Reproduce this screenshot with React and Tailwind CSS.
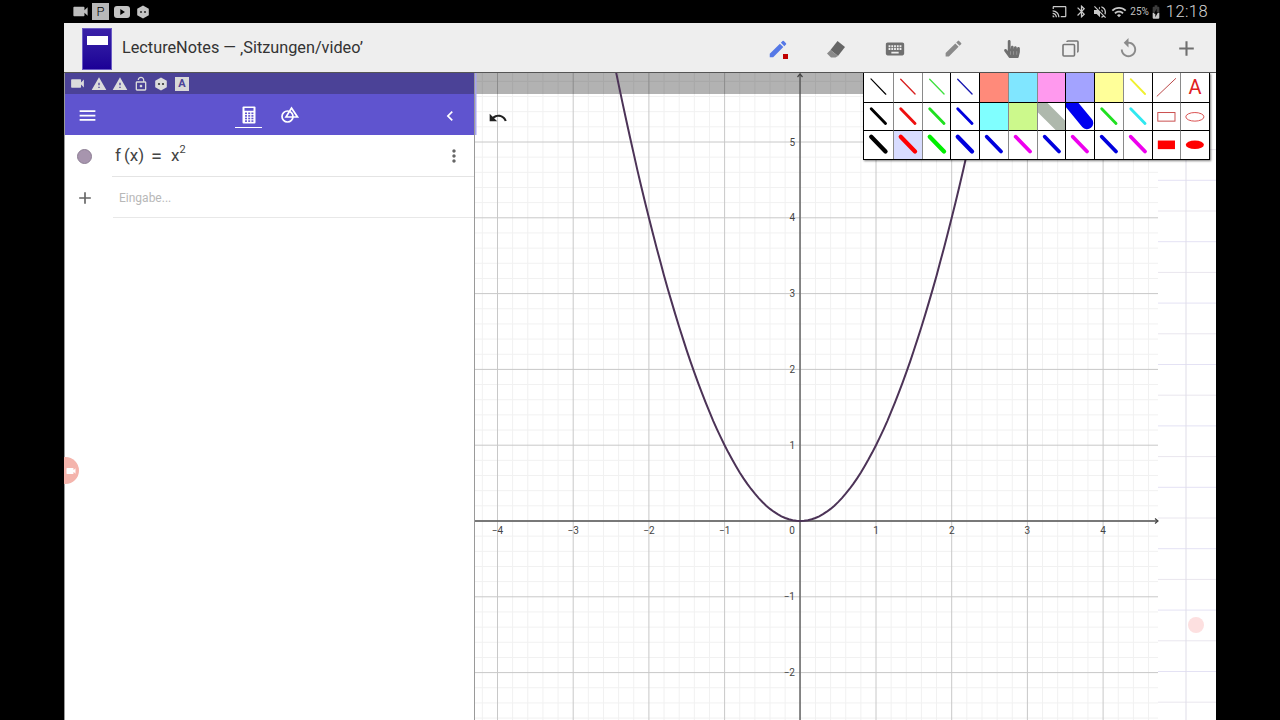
import { MdVideocam, MdWarning, MdLockOpen, MdMenu, MdChevronLeft, MdMoreVert, MdAdd, MdKeyboard, MdEdit, MdReplay, MdUndo, MdPlayArrow, MdCast, MdBluetooth, MdVolumeOff, MdWifi, MdBatteryCharging50 } from "react-icons/md";
import { FaHandPointer } from "react-icons/fa";

const X0 = 800.3;
const Y0 = 521;
const UNIT_X = 75.7;
const UNIT_Y = 75.8;

function Hexagon({ size = 14, color = "#ddd" }) {
  return (
    <svg width={size} height={size} viewBox="0 0 14 14">
      <path d="M7 0.5 L12.8 3.7 V10.3 L7 13.5 L1.2 10.3 V3.7 Z" fill={color} />
      <circle cx="5" cy="7" r="1.1" fill="#333" />
      <circle cx="9" cy="7" r="1.1" fill="#333" />
    </svg>
  );
}

function TopStatusBar() {
  return (
    <div className="h-[23px] flex items-center justify-between pl-[71px] pr-[72px] text-[#c8c8c8]">
      <div className="flex items-center">
        <MdVideocam size={19} className="text-[#bdbdbd]" />
        <div className="ml-[2px] w-[17px] h-[17px] bg-[#b8b8b8] flex items-center justify-center text-[13px] font-light leading-none text-black">P</div>
        <div className="ml-[5px] w-[16px] h-[12px] rounded-[3px] bg-[#c4c4c4] flex items-center justify-center">
          <MdPlayArrow size={10} className="text-black" />
        </div>
        <div className="ml-[6px]"><Hexagon color="#c4c4c4" /></div>
      </div>
      <div className="flex items-center">
        <MdCast size={15} />
        <MdBluetooth size={15} className="ml-[7px]" />
        <MdVolumeOff size={16} className="ml-[3px]" />
        <MdWifi size={16} className="ml-[3px]" />
        <span className="ml-[3px] text-[10px] text-[#c0c0c0]">25%</span>
        <MdBatteryCharging50 size={16} className="-ml-[1px]" />
        <span className="ml-[2px] mt-[2px] text-[16.5px] font-light text-[#d4d4d4] tracking-wide">12:18</span>
      </div>
    </div>
  );
}

function BookIcon() {
  return (
    <div className="w-[30px] h-[42px] ml-[18px] bg-gradient-to-b from-[#3a20a8] to-[#1c0096] border border-[#6a5cc4] flex justify-center">
      <div className="mt-[7px] w-[21px] h-[9px] bg-white" />
    </div>
  );
}

function EraserIcon() {
  return (
    <svg width="20" height="18" viewBox="0 0 20 18">
      <path d="M11.5 1 L19 7 L12 16 L4.5 10 Z" fill="#666" />
      <path d="M4.5 10 L12 16 L9.5 17.5 L5 17.5 L1 13.5 Z" fill="#8a8a8a" />
    </svg>
  );
}

function CopyIcon() {
  return (
    <svg width="17" height="17" viewBox="0 0 17 17" fill="none" stroke="#777" strokeWidth="1.6">
      <rect x="1" y="4.5" width="11.5" height="11.5" rx="1" />
      <path d="M5 2 Q5 1 6 1 H15 Q16 1 16 2 V11 Q16 12 15 12" />
    </svg>
  );
}

function Toolbar() {
  const iconClass = "text-[#6f6f6f]";
  return (
    <div className="h-[50px] pt-[2px] bg-[#eeeeee] border-b border-[#555] flex items-center">
      <BookIcon />
      <span className="ml-[10px] text-[16.25px] text-[#333]">LectureNotes — ‚Sitzungen/video’</span>
      <div className="ml-auto flex items-center">
        <div className="w-[58.4px] flex justify-center relative">
          <MdEdit size={22} className="text-[#5578e6]" />
          <div className="absolute left-[34px] top-[16px] w-[5px] h-[5px] bg-[#c00000]" />
        </div>
        <div className="w-[58.4px] flex justify-center"><EraserIcon /></div>
        <div className="w-[58.4px] flex justify-center"><MdKeyboard size={22} className={iconClass} /></div>
        <div className="w-[58.4px] flex justify-center"><MdEdit size={21} className="text-[#8a8a8a]" /></div>
        <div className="w-[58.4px] flex justify-center"><FaHandPointer size={18} className={iconClass} /></div>
        <div className="w-[58.4px] flex justify-center"><CopyIcon /></div>
        <div className="w-[58.4px] flex justify-center"><MdReplay size={23} className="text-[#8a8a8a]" /></div>
        <div className="w-[58.4px] flex justify-center"><MdAdd size={25} className={iconClass} /></div>
      </div>
    </div>
  );
}

function CalculatorIcon() {
  const dots = [];
  for (let r = 0; r < 4; r++) {
    for (let c = 0; c < 3; c++) {
      dots.push(<rect key={`${r}-${c}`} x={3 + c * 3.2} y={6.5 + r * 2.6} width="2" height="1.6" fill="#5f54cf" />);
    }
  }
  return (
    <svg width="14" height="18" viewBox="0 0 14 18">
      <rect x="0.5" y="0.5" width="13" height="17" rx="1" fill="white" />
      <rect x="2.5" y="2" width="9" height="2.8" fill="#5f54cf" />
      {dots}
    </svg>
  );
}

function GeometryIcon() {
  return (
    <svg width="20" height="20" viewBox="0 0 20 20" fill="none" stroke="white" strokeWidth="1.7">
      <circle cx="7.5" cy="11.5" r="5.5" />
      <path d="M11.5 3 L17.5 12 H6 Z" />
    </svg>
  );
}

function Sidebar() {
  return (
    <div className="w-[411px] shrink-0 bg-white border-l border-l-[#999] border-r border-r-[#9a9a9a] flex flex-col">
      <div className="h-[21px] bg-[#4b4297] flex items-center pl-[4px] text-[#dcdcdc] gap-[5px]">
        <MdVideocam size={17} />
        <MdWarning size={16} />
        <MdWarning size={16} />
        <MdLockOpen size={16} />
        <Hexagon size={14} color="#dcdcdc" />
        <div className="ml-[2px] w-[14px] h-[14px] bg-[#d8d8d8] flex items-center justify-center text-[11px] leading-none text-[#4b4297] font-bold">A</div>
      </div>
      <div className="h-[41px] pt-[2px] bg-[#5f54cf] flex items-center relative text-white">
        <MdMenu size={21} className="ml-[12px]" />
        <div className="absolute left-[170px] top-0 h-[34px] w-[27px] flex items-center justify-center border-b border-white pt-[8px]">
          <CalculatorIcon />
        </div>
        <div className="absolute left-[215px] top-[11px]"><GeometryIcon /></div>
        <MdChevronLeft size={20} className="ml-auto mr-[14px]" />
      </div>
      <div className="h-[42px] flex items-center">
        <div className="ml-[12px] w-[15px] h-[15px] rounded-full bg-[#a795ae] border border-[#8d7f94]" />
        <div className="ml-[20px] flex-1 h-full border-b border-[#e4e4e4] flex items-center pl-[3px] text-[17px] text-[#444]">
          <span>f</span>
          <span className="ml-[3px]">(x)</span>
          <span className="ml-[7px] text-[20px] leading-none">=</span>
          <span className="ml-[9px]">x</span>
          <span className="text-[11px] -mt-[10px]">2</span>
          <MdMoreVert size={20} className="ml-auto mr-[10px] text-[#666]" />
        </div>
      </div>
      <div className="h-[41px] flex items-center">
        <MdAdd size={20} className="ml-[10px] text-[#666]" />
        <div className="ml-[18px] pt-[2px] flex-1 h-full border-b border-[#e8e8e8] flex items-center pl-[6px] text-[12px] text-[#b8b8b8]">Eingabe...</div>
      </div>
    </div>
  );
}

function range(from, to) {
  const out = [];
  for (let i = from; i <= to; i++) out.push(i);
  return out;
}

function Graph() {
  const xMinor = range(-21, 23).filter((i) => i % 5 !== 0);
  const yMinor = range(-13, 29).filter((i) => i % 5 !== 0);
  const noteLines = range(-11, 7).map((i) => 487.3 + i * 30.7);
  let curve = "";
  for (let x = -2.6; x <= 2.6; x += 0.05) {
    curve += `${curve ? "L" : "M"}${(X0 + x * UNIT_X).toFixed(1)} ${(Y0 - x * x * UNIT_Y).toFixed(1)} `;
  }
  const xLabels = [-4, -3, -2, -1, 1, 2, 3, 4];
  const yLabels = [5, 4, 3, 2, 1, -1, -2];

  return (
    <svg className="flex-1 block" width="741" height="647" viewBox="475 73 741 647" fontFamily="Roboto, sans-serif">
      <rect x="475" y="73" width="741" height="647" fill="white" />
      {noteLines.map((y, i) => (
        <line key={y} x1="1158" x2="1216" y1={y} y2={y} stroke={i % 2 ? "#e4e2f4" : "#e9e6ee"} />
      ))}
      <line x1="1186" x2="1186" y1="73" y2="720" stroke="#dfdde8" />
      {xMinor.map((i) => {
        const x = X0 + (i * UNIT_X) / 5;
        return <line key={i} x1={x} x2={x} y1="73" y2="720" stroke="#f1f1f1" />;
      })}
      {yMinor.map((i) => {
        const y = Y0 - (i * UNIT_Y) / 5;
        return <line key={i} x1="475" x2="1158" y1={y} y2={y} stroke="#f1f1f1" />;
      })}
      {range(-4, 4).map((i) => (
        <line key={i} x1={X0 + i * UNIT_X} x2={X0 + i * UNIT_X} y1="73" y2="720" stroke="#c8c8c8" />
      ))}
      {range(-2, 6).map((i) => (
        <line key={i} x1="475" x2="1158" y1={Y0 - i * UNIT_Y} y2={Y0 - i * UNIT_Y} stroke="#c8c8c8" />
      ))}
      <rect x="475" y="73" width="683" height="21" fill="#000" fillOpacity="0.3" />
      <rect x="475" y="73" width="1.5" height="62" fill="#a8a4f0" />
      <line x1="800" x2="800" y1="74" y2="720" stroke="#555" strokeWidth="1.3" />
      <line x1="475" x2="1158" y1={Y0} y2={Y0} stroke="#555" strokeWidth="1.3" />
      <path d="M797.5 77 L800 74 L802.5 77" fill="none" stroke="#444" strokeWidth="1.2" />
      <path d="M1155 518.5 L1158 521 L1155 523.5" fill="none" stroke="#444" strokeWidth="1.2" />
      <path d={curve} fill="none" stroke="#4c3357" strokeWidth="2" />
      {xLabels.map((v) => (
        <text key={v} x={X0 + v * UNIT_X} y="534" fontSize="10" fill="#444" textAnchor="middle">
          {v < 0 ? `−${-v}` : v}
        </text>
      ))}
      <text x="792" y="534" fontSize="10" fill="#444" textAnchor="middle">0</text>
      {yLabels.map((v) => (
        <text key={v} x="795" y={Y0 - v * UNIT_Y + 3.5} fontSize="10" fill="#444" textAnchor="end">
          {v < 0 ? `−${-v}` : v}
        </text>
      ))}
    </svg>
  );
}

const BLACK = "#000000";
const RED = "#ff0000";
const GREEN = "#00ee00";
const BLUE = "#0000dd";
const MAGENTA = "#ee00ee";

const palette = [
  [
    { line: BLACK, w: 1.2 }, { line: "#d82020", w: 1.4 }, { line: "#40e040", w: 1.4 }, { line: "#1818b0", w: 1.4 },
    { fill: "bg-[#ff8a7a]" }, { fill: "bg-[#80e6ff]" }, { fill: "bg-[#ff99ee]" }, { fill: "bg-[#a3a3ff]" }, { fill: "bg-[#ffff99]" },
    { line: "#f0f030", w: 2 }, { shape: "slash" }, { shape: "letter" },
  ],
  [
    { line: BLACK, w: 3 }, { line: "#ee1010", w: 3 }, { line: "#20e020", w: 3 }, { line: BLUE, w: 3 },
    { fill: "bg-[#80ffff]" }, { fill: "bg-[#ccf98c]" }, { wide: "#aeb8ac" }, { blob: "#0000f0" },
    { line: "#20e020", w: 3 }, { line: "#30e8f0", w: 3 }, { shape: "rect" }, { shape: "ellipse" },
  ],
  [
    { line: BLACK, w: 4.5 }, { line: RED, w: 4.5, selected: true }, { line: GREEN, w: 4.5 }, { line: BLUE, w: 4.5 },
    { line: BLUE, w: 4 }, { line: MAGENTA, w: 4 }, { line: BLUE, w: 4 }, { line: MAGENTA, w: 4 },
    { line: BLUE, w: 4 }, { line: MAGENTA, w: 4 }, { shape: "rectFill" }, { shape: "ellipseFill" },
  ],
];

const columnBorders = [
  "border-l-0", "border-l-[#8a8a8a]", "border-l-[#8a8a8a]", "border-l-black",
  "border-l-black", "border-l-[#8a8a8a]", "border-l-[#8a8a8a]", "border-l-black",
  "border-l-black", "border-l-[#8a8a8a]", "border-l-black", "border-l-[#8a8a8a]",
];

function PaletteDrawing({ cell }) {
  if (cell.fill) return null;
  if (cell.shape === "letter") {
    return <div className="w-full h-full flex items-center justify-center text-[20px] leading-none text-[#e02020]">A</div>;
  }
  return (
    <svg className="block w-full h-full" viewBox="0 0 29 29">
      {cell.line && <line x1="7" y1="6" x2="22" y2="21.5" stroke={cell.line} strokeWidth={cell.w} strokeLinecap="round" />}
      {cell.wide && <line x1="0" y1="0" x2="29" y2="29" stroke={cell.wide} strokeWidth="14" />}
      {cell.blob && <line x1="3" y1="-2" x2="22" y2="21" stroke={cell.blob} strokeWidth="13" strokeLinecap="round" />}
      {cell.shape === "slash" && <line x1="4" y1="24" x2="24" y2="5" stroke="#b84040" strokeWidth="1" />}
      {cell.shape === "rect" && <rect x="5" y="10" width="18" height="9" fill="none" stroke="#c84848" strokeWidth="1" />}
      {cell.shape === "ellipse" && <ellipse cx="14.5" cy="14.5" rx="9.5" ry="4.5" fill="none" stroke="#d84848" strokeWidth="1" />}
      {cell.shape === "rectFill" && <rect x="5" y="10" width="18" height="9" fill={RED} />}
      {cell.shape === "ellipseFill" && <ellipse cx="14.5" cy="14.5" rx="9.5" ry="4.5" fill={RED} />}
    </svg>
  );
}

function Palette() {
  return (
    <div className="absolute left-[863px] top-[73px] w-[347px] h-[87px] bg-white grid grid-cols-12 grid-rows-3 border-l border-r border-b border-black shadow-[1px_1px_2px_rgba(0,0,0,0.5)]">
      {palette.flatMap((row, r) =>
        row.map((cell, c) => (
          <div
            key={`${r}-${c}`}
            className={`border-l overflow-hidden ${columnBorders[c]} ${r > 0 ? "border-t border-t-black" : ""} ${cell.fill || ""} ${cell.selected ? "bg-[#d8dcff]" : ""}`}
          >
            <PaletteDrawing cell={cell} />
          </div>
        ))
      )}
    </div>
  );
}

export default function App() {
  return (
    <div className="relative w-[1280px] h-[720px] bg-black overflow-hidden flex flex-col font-['Roboto',sans-serif]">
      <TopStatusBar />
      <div className="mx-[64px] flex-1 flex flex-col min-h-0">
        <Toolbar />
        <div className="flex-1 flex min-h-0">
          <Sidebar />
          <Graph />
        </div>
      </div>

      {/* Overlays */}
      <Palette />
      <MdUndo size={20} className="absolute left-[488px] top-[108px] text-[#222]" />
      <div className="absolute left-[64px] top-[457px] w-[15px] h-[27px] rounded-r-full bg-[#f4b4ac] flex items-center overflow-hidden">
        <MdVideocam size={12} className="text-white ml-[1px]" />
      </div>
      <div className="absolute left-[1188px] top-[617px] w-[16px] h-[16px] rounded-full bg-[#fde0e0]" />
    </div>
  );
}
